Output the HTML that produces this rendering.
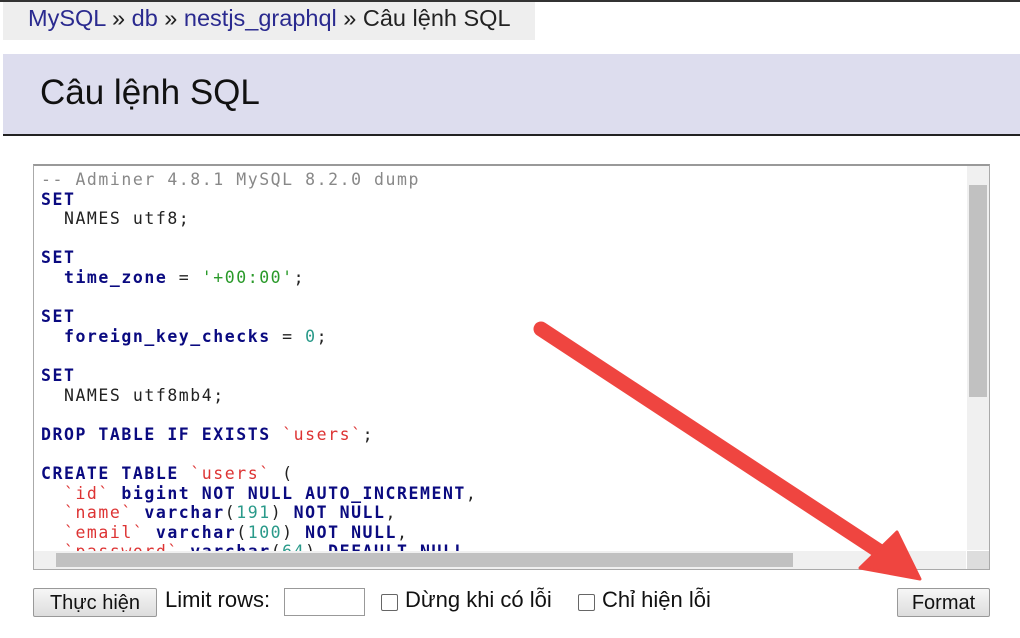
<!DOCTYPE html>
<html><head><meta charset="utf-8"><style>
body{margin:0;width:1020px;height:638px;background:#fff;font-family:"Liberation Sans",sans-serif;position:relative;overflow:hidden}
.top{position:absolute;left:0;top:0;width:1020px;height:2px;background:#333}
.bc{position:absolute;left:3px;top:2px;width:532px;height:38px;background:#eee;font-size:23.5px;line-height:32px;padding-left:25px;box-sizing:border-box;color:#222;white-space:nowrap}
.bc a{color:#2a2a8f;text-decoration:none}
.hd{position:absolute;left:3px;top:54px;width:1017px;height:80px;background:#dde;border-bottom:2px solid #222}
.hd h2{margin:0;font-weight:normal;font-size:35px;position:absolute;left:37px;top:19px;color:#111}
.ta{position:absolute;left:33px;top:164px;width:957px;height:406px;border:1px solid #aaa;border-top:2px solid #999;box-sizing:border-box;overflow:hidden}
pre{margin:0;position:absolute;left:7px;top:4px;font-family:"DejaVu Sans Mono",monospace;font-size:16.5px;letter-spacing:1.55px;line-height:19.6px;color:#222}
.c{color:#888}.k{color:#0a0a80;font-weight:bold}.s{color:#d33}.n{color:#2a9a8a}.g{color:#2a9a2a}
.vs{position:absolute;right:0;top:0;width:22px;height:384px;background:#f0f0f0}
.vt{position:absolute;left:2px;top:19px;width:18px;height:212px;background:#c1c1c1}
.hs{position:absolute;left:0;bottom:0;width:932px;height:18px;background:#f0f0f0}
.ht{position:absolute;left:22px;top:2px;width:737px;height:14px;background:#c1c1c1}
.cor{position:absolute;right:0;bottom:0;width:22px;height:18px;background:#ddd}
.btn{position:absolute;top:588px;height:29px;border:1px solid #999;border-radius:2px;background:linear-gradient(#f6f6f6,#ddd);font-size:20px;line-height:28px;text-align:center;box-sizing:border-box;color:#111;white-space:nowrap}
.lbl{position:absolute;top:586px;font-size:22px;line-height:28px;color:#111;white-space:nowrap}
.inp{position:absolute;left:284px;top:588px;width:81px;height:28px;border:1px solid #999;box-sizing:border-box;background:#fff}
.cb{position:absolute;top:594px;width:17px;height:17px;border:1px solid #666;border-radius:2px;box-sizing:border-box;background:#fff}
</style></head><body>
<div class="top"></div>
<div class="bc"><a>MySQL</a> » <a>db</a> » <a>nestjs_graphql</a> » Câu lệnh SQL</div>
<div class="hd"><h2>Câu lệnh SQL</h2></div>
<div class="ta">
<pre><span class="c">-- Adminer 4.8.1 MySQL 8.2.0 dump</span>
<span class="k">SET</span>
  NAMES utf8;

<span class="k">SET</span>
  <span class="k">time_zone</span> = <span class="g">'+00:00'</span>;

<span class="k">SET</span>
  <span class="k">foreign_key_checks</span> = <span class="n">0</span>;

<span class="k">SET</span>
  NAMES utf8mb4;

<span class="k">DROP TABLE IF EXISTS</span> <span class="s">`users`</span>;

<span class="k">CREATE TABLE</span> <span class="s">`users`</span> (
  <span class="s">`id`</span> <span class="k">bigint NOT NULL AUTO_INCREMENT</span>,
  <span class="s">`name`</span> <span class="k">varchar</span>(<span class="n">191</span>) <span class="k">NOT NULL</span>,
  <span class="s">`email`</span> <span class="k">varchar</span>(<span class="n">100</span>) <span class="k">NOT NULL</span>,
  <span class="s">`password`</span> <span class="k">varchar</span>(<span class="n">64</span>) <span class="k">DEFAULT NULL</span></pre>
<div class="vs"><div class="vt"></div></div>
<div class="hs"><div class="ht"></div></div>
<div class="cor"></div>
</div>
<svg style="position:absolute;left:0;top:0" width="1020" height="638"><line x1="541" y1="329" x2="885" y2="555" stroke="#ef4540" stroke-width="15" stroke-linecap="round"/><polygon points="860,568 897,532 920,579" fill="#ef4540" stroke="#ef4540" stroke-width="3" stroke-linejoin="round"/></svg>
<div class="btn" style="left:33px;width:124px">Thực hiện</div>
<div class="lbl" style="left:165px">Limit rows:</div>
<div class="inp"></div>
<div class="cb" style="left:381px"></div>
<div class="lbl" style="left:405px">Dừng khi có lỗi</div>
<div class="cb" style="left:578px"></div>
<div class="lbl" style="left:602px">Chỉ hiện lỗi</div>
<div class="btn" style="left:897px;width:93px">Format</div>
</body></html>
